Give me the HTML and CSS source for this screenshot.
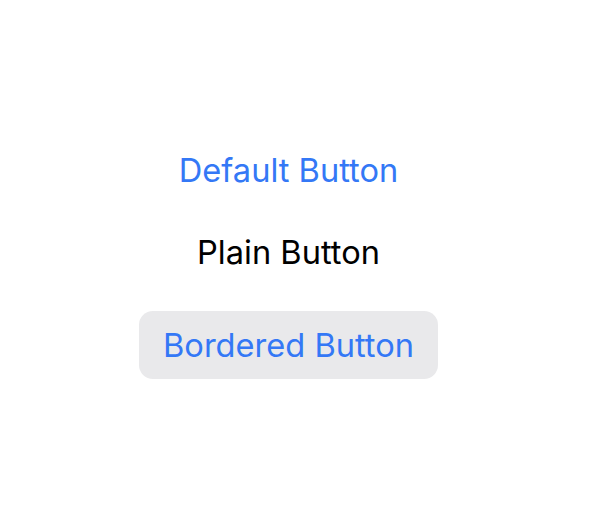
FILE: index.html
```html
<!DOCTYPE html>
<html lang="en">

<head>
    <meta charset="UTF-8">
    <meta name="viewport" content="width=device-width, initial-scale=1.0">
    <title>Buttons</title>
    <link rel="stylesheet" href="styles.css">
</head>

<body>
    <main class="button-stack">
        <button class="btn btn-default">Default Button</button>
        <button class="btn btn-plain">Plain Button</button>
        <button class="btn btn-bordered">Bordered Button</button>
    </main>
</body>

</html>
```

FILE: styles.css
```css
body {
    margin: 0;
    font-family: Inter, 'Noto Sans', sans-serif;
    background: #ffffff;
}

.button-stack {
    display: flex;
    flex-direction: column;
    align-items: center;
    padding: 150px 17px 0 0;
}

.btn {
    font-family: inherit;
    font-size: 32.6px;
    line-height: 40px;
    border: 0;
    background: none;
    padding: 0;
    cursor: pointer;
}

.btn-default {
    color: #3478f6;
}

.btn-plain {
    margin-top: 42px;
    color: #000000;
}

.btn-bordered {
    margin-top: 39px;
    color: #3478f6;
    background: #e9e9eb;
    border-radius: 14px;
    padding: 14px 24px;
}
```
